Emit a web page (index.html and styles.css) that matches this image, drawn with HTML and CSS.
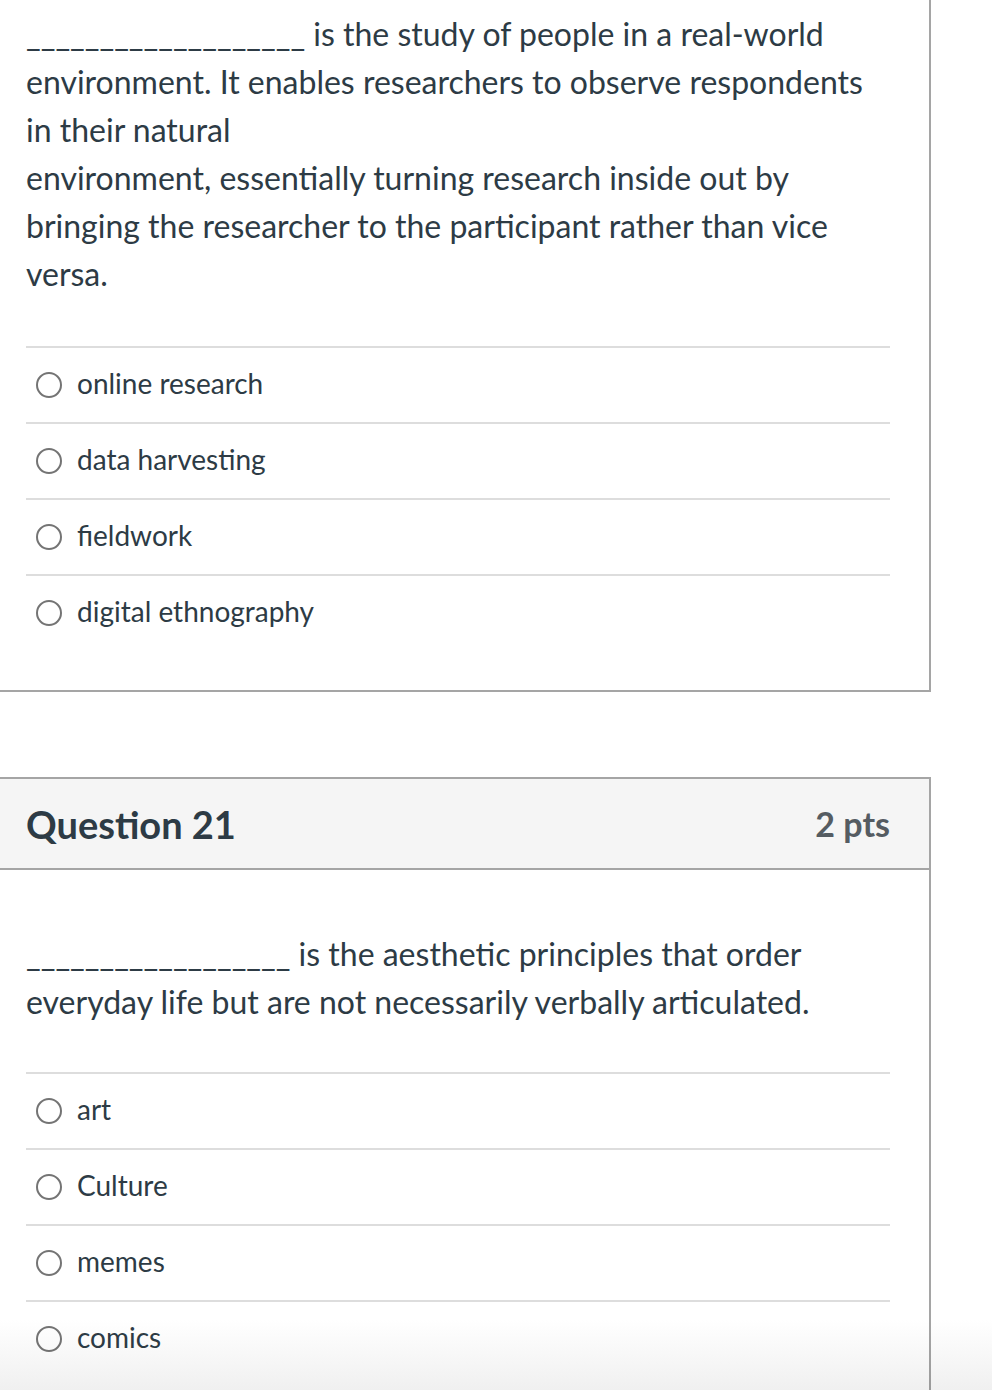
FILE: index.html
```html
<!DOCTYPE html>
<html lang="en">
<head>
<meta charset="utf-8">
<title>Quiz</title>
<link rel="stylesheet" href="styles.css">
</head>
<body>
<div class="page">
  <section class="card card-first">
    <div class="card-body">
      <div class="qtext qtext-first">
        <p>___________________ is the study of people in a real-world environment. It enables researchers to observe respondents in their natural<br>environment, essentially turning research inside out by bringing the researcher to the participant rather than vice versa.</p>
      </div>
      <div class="answers">
        <label class="answer"><span class="radio"></span><span class="atext">online research</span></label>
        <label class="answer"><span class="radio"></span><span class="atext">data harvesting</span></label>
        <label class="answer"><span class="radio"></span><span class="atext">fieldwork</span></label>
        <label class="answer"><span class="radio"></span><span class="atext">digital ethnography</span></label>
      </div>
    </div>
  </section>

  <section class="card card-second">
    <header class="card-header">
      <h2 class="qname">Question 21</h2>
      <span class="pts">2 pts</span>
    </header>
    <div class="card-body">
      <div class="qtext qtext-second">
        <p>__________________ is the aesthetic principles that order everyday life but are not necessarily verbally articulated.</p>
      </div>
      <div class="answers">
        <label class="answer"><span class="radio"></span><span class="atext">art</span></label>
        <label class="answer"><span class="radio"></span><span class="atext">Culture</span></label>
        <label class="answer"><span class="radio"></span><span class="atext">memes</span></label>
        <label class="answer"><span class="radio"></span><span class="atext">comics</span></label>
      </div>
    </div>
  </section>
</div>
<div class="fade"></div>
</body>
</html>
```
FILE: styles.css
```css
html, body {
  margin: 0;
  padding: 0;
  background: #ffffff;
}

body {
  font-family: Lato, "Open Sans", "Liberation Sans", sans-serif;
  color: #2d3b45;
  overflow: hidden;
  height: 1390px;
}

.page {
  width: 992px;
}

.card {
  width: 933px;
  margin-left: -2px;
  border: 2px solid #a5a5a5;
  background: #fff;
  box-sizing: border-box;
}

.card-first {
  border-top: none;
}

.card-second {
  margin-top: 85px;
}

.card-header {
  display: flex;
  justify-content: space-between;
  align-items: center;
  background: #f5f5f5;
  border-bottom: 2px solid #a5a5a5;
  height: 91px;
  padding: 0 39px 0 26px;
  box-sizing: border-box;
}

.qname {
  margin: 0;
  font-size: 38px;
  font-weight: 700;
  color: #2d3b45;
}

.pts {
  font-size: 34px;
  font-weight: 700;
  color: #555c62;
}

.card-body {
  padding: 0 39px 0 26px;
}

.qtext p {
  margin: 0;
  font-size: 32px;
  line-height: 48px;
}

.qtext-first {
  padding-top: 10px;
  padding-bottom: 48px;
}

.qtext-second {
  padding-top: 60px;
  padding-bottom: 46px;
}

.answers {
  display: flex;
  flex-direction: column;
}

.answer {
  display: flex;
  align-items: center;
  height: 76px;
  border-top: 2px solid #dddddd;
  box-sizing: border-box;
}

.card-first .answers {
  padding-bottom: 40px;
}

.card-second .answers {
  padding-bottom: 40px;
}

.radio {
  width: 26px;
  height: 26px;
  border: 2px solid #747474;
  border-radius: 50%;
  box-sizing: border-box;
  margin-left: 10px;
  margin-right: 15px;
  flex: none;
}

.atext {
  font-size: 28px;
  color: #2d3b45;
  position: relative;
  top: -2px;
}

.fade {
  position: fixed;
  left: 0;
  right: 0;
  bottom: 0;
  height: 70px;
  background: linear-gradient(to bottom, #ffffff, #f0f0f0);
  mix-blend-mode: multiply;
  pointer-events: none;
}
```
